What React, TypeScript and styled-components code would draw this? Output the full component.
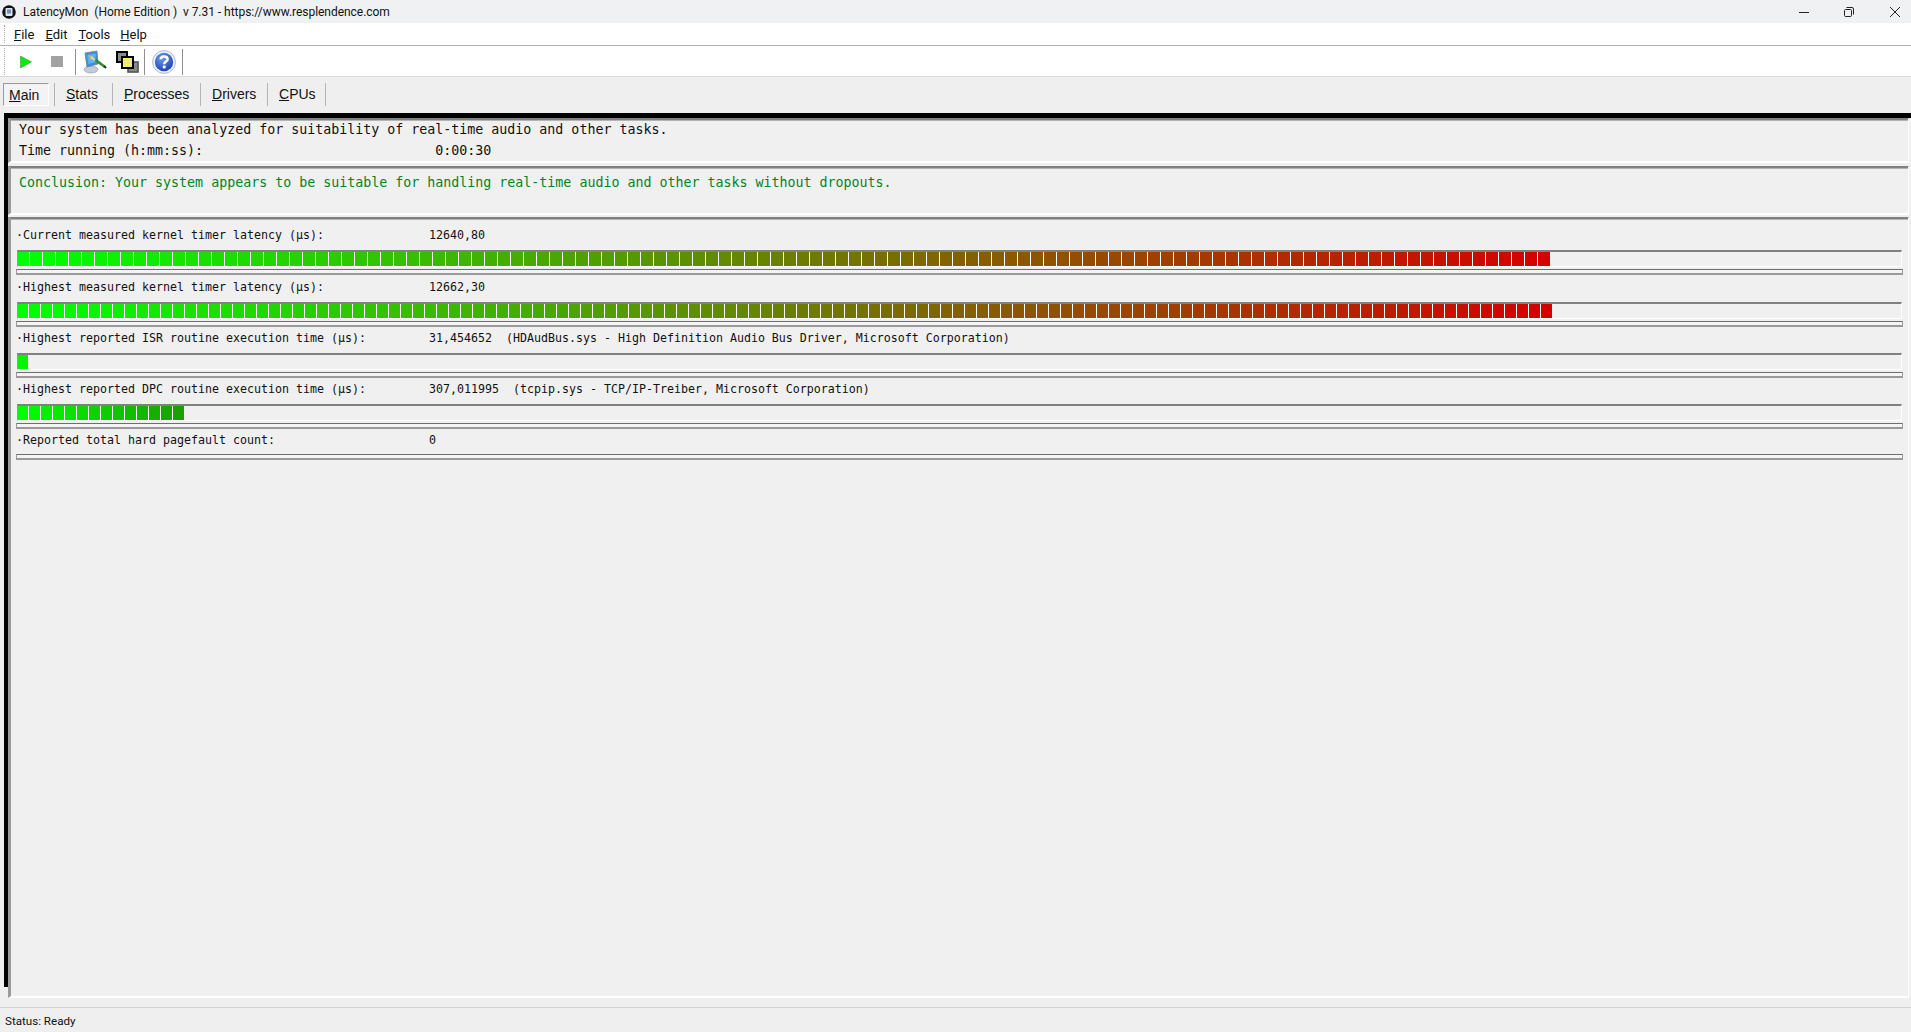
import React from "react";
import styled, { createGlobalStyle } from "styled-components";

const Global = createGlobalStyle`
  html, body { margin: 0; padding: 0; height: 100%; overflow: hidden; background: #efefef; }
  #root { height: 100%; }
`;

const Window = styled.div`
  width: 1911px;
  height: 1032px;
  display: flex;
  flex-direction: column;
  background: #efefef;
  overflow: hidden;
`;

const TitleBar = styled.div`
  height: 23px;
  background: #f0f1f3;
  display: flex;
  align-items: center;
  padding-left: 2px;
  font: 12px Roboto, sans-serif;
  color: #111;
  white-space: pre;
`;
const TitleText = styled.span`
  margin-left: 7px;
  flex: 1;
  letter-spacing: -0.035px;
`;
const WinButton = styled.div<{ $w: number }>`
  width: ${(p) => p.$w}px;
  display: flex;
  justify-content: flex-start;
`;

const MenuBar = styled.div`
  height: 22px;
  background: #fff;
  border-bottom: 1px solid #b0b0b0;
  display: flex;
  align-items: center;
  font: 13px Roboto, sans-serif;
  color: #111;
  padding-left: 4px;
  position: relative;
`;
const Gripper = styled.div`
  width: 1px;
  align-self: stretch;
  margin: 2px 8px 2px 0;
  border-left: 1px dotted #a8a8a8;
`;
const MenuItem = styled.span<{ $mr: number }>`
  margin-right: ${(p) => p.$mr}px;
`;
const U = styled.span`
  text-decoration: underline;
`;

const ToolBar = styled.div`
  height: 31px;
  box-sizing: border-box;
  padding: 1px 0 0 4px;
  background: #fff;
  border-bottom: 1px solid #d8d8d8;
  display: flex;
  align-items: center;
`;
const ToolGripper = styled(Gripper)`
  margin: 1px 0;
`;
const ToolSlot = styled.div<{ $w: number; $ml?: number }>`
  width: ${(p) => p.$w}px;
  margin-left: ${(p) => p.$ml ?? 0}px;
  display: flex;
  align-items: center;
  justify-content: center;
  flex: none;
`;
const ToolSep = styled.div`
  width: 1px;
  height: 26px;
  background: #8f8f8f;
  flex: none;
`;

const TabBar = styled.div`
  height: 36px;
  background: #efefef;
  display: flex;
  align-items: flex-start;
  padding: 6px 0 0 3px;
  box-sizing: border-box;
  font: 14px "Liberation Sans", Arial, sans-serif;
  color: #111;
`;
const ActiveTab = styled.div`
  width: 46px;
  height: 23px;
  box-sizing: border-box;
  border: 1px solid;
  border-color: #9a9a9a #fff #fff #9a9a9a;
  background: #f3f3f3;
  padding: 3px 0 0 5px;
  margin-right: 5px;
  line-height: 16px;
  flex: none;
`;
const Tab = styled.div<{ $w: number }>`
  width: ${(p) => p.$w}px;
  height: 23px;
  box-sizing: border-box;
  border-left: 1px solid #b4b4b4;
  padding: 3px 0 0 11px;
  line-height: 16px;
  flex: none;
`;
const TabEnd = styled.div`
  width: 1px;
  height: 23px;
  background: #b4b4b4;
  flex: none;
`;

const Frame = styled.div`
  flex: 1;
  display: flex;
  margin-left: 4px;
  min-height: 0;
`;
const BlackEdge = styled.div`
  width: 4px;
  height: 874px;
  background: #000;
  flex: none;
`;
const FrameBody = styled.div`
  flex: 1;
  display: flex;
  flex-direction: column;
  min-width: 0;
`;
const BlackTop = styled.div`
  height: 5px;
  background: #000;
  flex: none;
`;
const Panel = styled.div<{ $h: number }>`
  height: ${(p) => p.$h}px;
  box-sizing: border-box;
  margin-right: 2px;
  background: #f0f0f0;
  border-top: 1px solid #808080;
  border-left: 3px solid #9a9a9a;
  border-right: 1px solid #fff;
  border-bottom: 2px solid #fff;
  box-shadow: inset 0 1px 0 #808080, inset 0 2px 0 #b4b4b4;
  flex: none;
  position: relative;
`;
const InfoText = styled.div`
  font: 13.3px/21px "DejaVu Sans Mono", monospace;
  color: #111;
  white-space: pre;
  padding-left: 8px;
`;
const Conclusion = styled(InfoText)`
  color: #008426;
  padding-top: 5px;
`;
const Gap = styled.div<{ $h: number }>`
  height: ${(p) => p.$h}px;
  flex: none;
`;
const MetricsPanel = styled(Panel)`
  padding: 9px 0 0 5px;
`;
const Metric = styled.div`
  display: flex;
  flex-direction: column;
  height: 51px;
  &:first-child {
    height: 52px;
  }
`;
const Label = styled.div`
  font: 11.63px/17px "DejaVu Sans Mono", monospace;
  color: #111;
  white-space: pre;
`;
const Track = styled.div`
  margin: 6px 6px 0 1px;
  height: 17px;
  box-sizing: border-box;
  border-top: 2px solid #808080;
  border-left: 1px solid #9a9a9a;
  border-right: 1px solid #fff;
  border-bottom: 1px solid #fff;
  display: flex;
  flex: none;
`;
const Seg = styled.div<{ $w: number }>`
  width: ${(p) => p.$w}px;
  height: 14px;
  flex: none;
  border-right: 1px solid #fff;
  &:last-child {
    border-right: none;
  }
`;
const Thin = styled.div`
  margin: 2px 5px 0 0;
  height: 6px;
  box-sizing: border-box;
  border: 1px solid #9a9a9a;
  border-top: 1px solid #6e6e6e;
  border-bottom: 2px solid #9a9a9a;
  background: #f4f4f4;
  flex: none;
`;
const ThinLast = styled(Thin)`
  margin-top: 5px;
`;

const StatusBar = styled.div`
  height: 25px;
  box-sizing: border-box;
  border-top: 1px solid #d2d2d2;
  background: #efefef;
  font: 11.6px/27px Roboto, sans-serif;
  color: #111;
  padding-left: 5px;
`;

type BarProps = { first: number; width: number; count: number; mix: (t: number) => string };

const rowColor = (t: number) => {
  const r = Math.round(212 * t);
  const g = Math.round(255 * (1 - t));
  return `rgb(${r},${g},0)`;
};
const shortColor = (t: number) => {
  const r = Math.round(26 * t);
  const g = Math.round(255 - 95 * t);
  return `rgb(${r},${g},0)`;
};

const Bar = ({ first, width, count, mix }: BarProps) => (
  <Track>
    {Array.from({ length: count }, (_, i) => (
      <Seg
        key={i}
        $w={i === 0 ? first : width}
        style={{ background: mix(count > 1 ? i / (count - 1) : 0.1) }}
      />
    ))}
  </Track>
);

const PlayIcon = () => (
  <svg width="14" height="14" viewBox="0 0 14 14">
    <path d="M1.5 1 L12.5 7 L1.5 13 Z" fill="#00f000" stroke="#5a9a5a" strokeWidth="0.7" />
  </svg>
);
const StopIcon = () => (
  <svg width="12" height="11" viewBox="0 0 12 11">
    <rect width="12" height="11" fill="#a2a2a2" />
  </svg>
);
const ToolsIcon = () => (
  <svg width="25" height="24" viewBox="0 0 25 24">
    <ellipse cx="9" cy="19.5" rx="7" ry="3.5" fill="#c4cbd6" stroke="#8b94a5" strokeWidth="0.6" />
    <path d="M3 3 L15 1 L16 14 L5 17 Z" fill="#3c8fe0" stroke="#6f7f95" strokeWidth="0.8" />
    <path d="M5 5 L13.5 3.5 L14 12 L6.5 14 Z" fill="#58b4f2" />
    <path d="M6 4.5 L12 8 L9 10 Z" fill="#f0b040" />
    <path d="M11 8 L23 17" stroke="#2f8f2f" strokeWidth="2.8" />
    <path d="M9 7 L13 10" stroke="#d9d9b0" strokeWidth="2.4" />
    <path d="M22 16 L24 18" stroke="#1c3c1c" strokeWidth="2" />
  </svg>
);
const WindowsIcon = () => (
  <svg width="23" height="22" viewBox="0 0 23 22">
    <rect x="1" y="1" width="10" height="10" fill="#8a8a8a" stroke="#000" strokeWidth="2" />
    <rect x="12" y="11" width="10" height="10" fill="#8a8a8a" stroke="#555" strokeWidth="1.6" />
    <rect x="6" y="6" width="11" height="11" fill="#ffff40" stroke="#000" strokeWidth="2" />
    <path d="M7.5 9 H16 M7.5 12 H16 M7.5 15 H16 M9 7.5 V16 M12 7.5 V16 M15 7.5 V16" stroke="#d8d8b0" strokeWidth="0.8" />
  </svg>
);
const HelpIcon = () => (
  <svg width="24" height="24" viewBox="0 0 24 24">
    <defs>
      <radialGradient id="helpBlue" cx="40%" cy="30%" r="75%">
        <stop offset="0" stopColor="#6e9cf0" />
        <stop offset="1" stopColor="#1a3fae" />
      </radialGradient>
    </defs>
    <circle cx="12" cy="12" r="11.4" fill="#eef2fa" stroke="#9aa6c0" strokeWidth="0.8" />
    <circle cx="12" cy="12" r="9.2" fill="url(#helpBlue)" />
    <path
      d="M8.6 9.2 C8.8 5.6 15.4 5.4 15.6 9.2 C15.7 11.6 12.2 11.6 12.2 14.2"
      fill="none"
      stroke="#fff"
      strokeWidth="2.5"
    />
    <rect x="10.8" y="15.6" width="2.8" height="2.8" fill="#fff" />
  </svg>
);
const AppIcon = () => (
  <svg width="14" height="14" viewBox="0 0 14 14">
    <circle cx="7" cy="7" r="6.8" fill="#111" />
    <rect x="3.5" y="3" width="7" height="8" rx="1" fill="#dfe6ee" />
    <rect x="5" y="4.5" width="4" height="4" fill="#6f90b8" />
  </svg>
);

const Minimize = () => (
  <svg width="10" height="10" viewBox="0 0 10 10">
    <path d="M0 5.5 H10" stroke="#222" strokeWidth="1" />
  </svg>
);
const Restore = () => (
  <svg width="10" height="10" viewBox="0 0 10 10" fill="none">
    <rect x="0.5" y="2.5" width="7" height="7" rx="1" stroke="#222" />
    <path d="M2.5 0.5 H8 A1.5 1.5 0 0 1 9.5 2 V7.5" stroke="#222" />
  </svg>
);
const Close = () => (
  <svg width="10" height="10" viewBox="0 0 10 10">
    <path d="M0 0 L10 10 M10 0 L0 10" stroke="#222" strokeWidth="1" />
  </svg>
);

export default function App() {
  return (
    <Window>
      <Global />
      <TitleBar>
        <AppIcon />
        <TitleText>LatencyMon  (Home Edition )  v 7.31 - https://www.resplendence.com</TitleText>
        <WinButton $w={45}><Minimize /></WinButton>
        <WinButton $w={46}><Restore /></WinButton>
        <WinButton $w={21}><Close /></WinButton>
      </TitleBar>
      <MenuBar>
        <Gripper />
        <MenuItem $mr={11}><U>F</U>ile</MenuItem>
        <MenuItem $mr={11}><U>E</U>dit</MenuItem>
        <MenuItem $mr={10}><U>T</U>ools</MenuItem>
        <MenuItem $mr={0}><U>H</U>elp</MenuItem>
      </MenuBar>
      <ToolBar>
        <ToolGripper />
        <ToolSlot $w={30} $ml={5}><PlayIcon /></ToolSlot>
        <ToolSlot $w={32}><StopIcon /></ToolSlot>
        <ToolSlot $w={2} />
        <ToolSep />
        <ToolSlot $w={36}><ToolsIcon /></ToolSlot>
        <ToolSlot $w={30}><WindowsIcon /></ToolSlot>
        <ToolSlot $w={2} />
        <ToolSep />
        <ToolSlot $w={37}><HelpIcon /></ToolSlot>
        <ToolSep />
      </ToolBar>
      <TabBar>
        <ActiveTab><U>M</U>ain</ActiveTab>
        <Tab $w={58}><U>S</U>tats</Tab>
        <Tab $w={88}><U>P</U>rocesses</Tab>
        <Tab $w={67}><U>D</U>rivers</Tab>
        <Tab $w={58}><U>C</U>PUs</Tab>
        <TabEnd />
      </TabBar>
      <Frame>
        <BlackEdge />
        <FrameBody>
          <BlackTop />
          <Panel $h={45}>
            <InfoText>Your system has been analyzed for suitability of real-time audio and other tasks.</InfoText>
            <InfoText>{"Time running (h:mm:ss):" + " ".repeat(29) + "0:00:30"}</InfoText>
          </Panel>
          <Gap $h={3} />
          <Panel $h={49}>
            <Conclusion>Conclusion: Your system appears to be suitable for handling real-time audio and other tasks without dropouts.</Conclusion>
          </Panel>
          <Gap $h={2} />
          <MetricsPanel $h={781}>
            <Metric>
              <Label>{"·Current measured kernel timer latency (µs):" + " ".repeat(15) + "12640,80"}</Label>
              <Bar first={11} width={12} count={118} mix={rowColor} />
              <Thin />
            </Metric>
            <Metric>
              <Label>{"·Highest measured kernel timer latency (µs):" + " ".repeat(15) + "12662,30"}</Label>
              <Bar first={10} width={11} count={128} mix={rowColor} />
              <Thin />
            </Metric>
            <Metric>
              <Label>{"·Highest reported ISR routine execution time (µs):" + " ".repeat(9) + "31,454652  (HDAudBus.sys - High Definition Audio Bus Driver, Microsoft Corporation)"}</Label>
              <Bar first={10} width={11} count={1} mix={shortColor} />
              <Thin />
            </Metric>
            <Metric>
              <Label>{"·Highest reported DPC routine execution time (µs):" + " ".repeat(9) + "307,011995  (tcpip.sys - TCP/IP-Treiber, Microsoft Corporation)"}</Label>
              <Bar first={10} width={11} count={14} mix={shortColor} />
              <Thin />
            </Metric>
            <Metric>
              <Label>{"·Reported total hard pagefault count:" + " ".repeat(22) + "0"}</Label>
              <ThinLast />
            </Metric>
          </MetricsPanel>
        </FrameBody>
      </Frame>
      <StatusBar>Status: Ready</StatusBar>
    </Window>
  );
}
